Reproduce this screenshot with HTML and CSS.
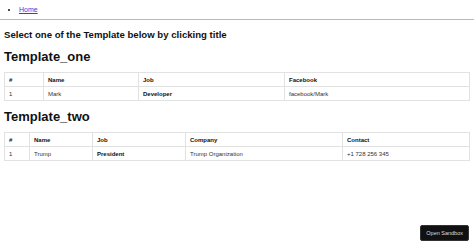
FILE: index.html
```html
<!DOCTYPE html>
<html lang="en">
<head>
    <meta charset="UTF-8">
    <title>Templates</title>
    <link rel="stylesheet" href="styles.css">
</head>
<body>
    <ul class="nav">
        <li><a href="#">Home</a></li>
    </ul>
    <hr class="rule">
    <div class="page">
        <h3 class="intro">Select one of the Template below by clicking title</h3>

        <h2 class="title">Template_one</h2>
        <table class="grid grid-one">
            <tr>
                <th>#</th>
                <th>Name</th>
                <th>Job</th>
                <th>Facebook</th>
            </tr>
            <tr>
                <td>1</td>
                <td>Mark</td>
                <td><b>Developer</b></td>
                <td>facebook/Mark</td>
            </tr>
        </table>

        <h2 class="title">Template_two</h2>
        <table class="grid grid-two">
            <tr>
                <th>#</th>
                <th>Name</th>
                <th>Job</th>
                <th>Company</th>
                <th>Contact</th>
            </tr>
            <tr>
                <td>1</td>
                <td>Trump</td>
                <td><b>President</b></td>
                <td>Trump Organization</td>
                <td>+1 728 256 345</td>
            </tr>
        </table>
    </div>
    <button class="sandbox">Open Sandbox</button>
</body>
</html>
```

FILE: styles.css
```css
*{
    margin: 0;
    padding: 0;
    box-sizing: border-box;
}
body{
    font-family: "Liberation Sans", Arial, sans-serif;
    color: #111;
    background: #fff;
}
.nav{
    list-style: disc;
    padding: 5px 0 0 19px;
    font-size: 7px;
    line-height: 9px;
}
.nav a{
    color: #3a3ae0;
}
.rule{
    border: 0;
    border-top: 1px solid #b8b8b8;
    margin-top: 5px;
}
.page{
    padding: 0 4px;
}
.intro{
    font-size: 9.6px;
    line-height: 12px;
    margin-top: 9px;
}
.title{
    font-size: 13px;
    line-height: 15px;
    margin-top: 8px;
    margin-bottom: 8px;
}
.grid{
    width: 100%;
    border-collapse: collapse;
    font-size: 6px;
    margin-bottom: 8px;
}
.grid th,.grid td{
    border: 1px solid #e2e2e2;
    height: 14px;
    padding: 0 4px;
    text-align: left;
    vertical-align: middle;
}
.grid th{
    font-weight: bold;
}
.grid td{
    color: #333;
}
.grid td b{
    color: #111;
}
.grid-one th:nth-child(1){ width: 39px; }
.grid-one th:nth-child(2){ width: 95px; }
.grid-one th:nth-child(3){ width: 146px; }
.grid-two th:nth-child(1){ width: 25px; }
.grid-two th:nth-child(2){ width: 63px; }
.grid-two th:nth-child(3){ width: 93px; }
.grid-two th:nth-child(4){ width: 157px; }
.sandbox{
    position: fixed;
    right: 5px;
    bottom: 7px;
    background: #111;
    color: #ddd;
    border: 1px solid #333;
    border-radius: 2px;
    font-family: "Liberation Sans", Arial, sans-serif;
    font-size: 5.5px;
    padding: 4px 5px;
}
```
